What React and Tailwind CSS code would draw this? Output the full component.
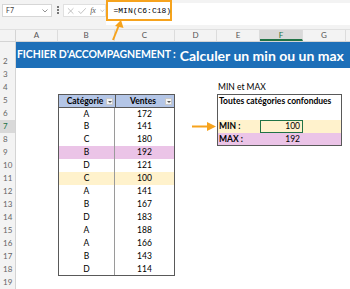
import React from 'react'

const font = { fontFamily: 'Lato, "Liberation Sans", sans-serif' }

const tableRows = [
  ['A', 172, ''],
  ['B', 141, ''],
  ['C', 180, ''],
  ['B', 192, 'bg-[#ebc4e7]'],
  ['D', 121, ''],
  ['C', 100, 'bg-[#fff2cc]'],
  ['A', 141, ''],
  ['B', 167, ''],
  ['D', 183, ''],
  ['A', 188, ''],
  ['A', 166, ''],
  ['B', 143, ''],
  ['D', 114, ''],
]

function RowHead({ n, active }) {
  return (
    <div
      className={`w-[16px] shrink-0 pl-[3px] text-[8px] leading-[13px] border-r border-[#d4d4d4] ${
        active ? 'bg-[#d9d9d9] text-[#217346]' : 'bg-[#f3f3f3] text-[#666]'
      }`}
    >
      {n}
    </div>
  )
}

function FilterBtn() {
  return (
    <span className="absolute right-[2px] top-[3px] w-[7px] h-[7px] bg-[#f4f4f4] border border-[#c8c8c8] flex items-center justify-center">
      <span className="block w-0 h-0 border-l-[2px] border-r-[2px] border-t-[2px] border-l-transparent border-r-transparent border-t-[#555]" />
    </span>
  )
}

function TableCells({ row, idx }) {
  // columns B and C for rows 5..18
  if (idx === 5) {
    return (
      <div className="flex w-[117px] h-[13px] bg-[#b4c6e7] border-l border-r border-t border-[#595959] font-bold text-[8.5px] leading-[12px] text-black">
        <div className="relative w-[57px] text-center border-r border-[#595959] pr-[4px]">
          Catégorie
          <FilterBtn />
        </div>
        <div className="relative flex-1 text-center pr-[4px]">
          Ventes
          <FilterBtn />
        </div>
      </div>
    )
  }
  const [cat, val, bg] = row
  const last = idx === 18
  return (
    <div
      className={`flex w-[117px] h-[13px] border-l border-r border-[#595959] text-[8.5px] leading-[13px] text-black ${
        last ? 'border-b' : ''
      } ${idx === 6 ? 'border-t' : ''} ${bg}`}
    >
      <div className="w-[56px] text-center border-r border-[#9a9a9a]">{cat}</div>
      <div className="flex-1 text-center">{val}</div>
    </div>
  )
}

function RightBox({ idx }) {
  if (idx === 4) {
    return (
      <div className="w-[129px] text-[8.5px] leading-[13px] text-black pl-[1px]">MIN et MAX</div>
    )
  }
  if (idx < 5 || idx > 8) return <div className="w-[129px]" />
  const base = 'w-[125px] h-[13px] border-l border-r border-[#595959] text-[8.5px] leading-[12px] text-black'
  if (idx === 5)
    return (
      <div className="w-[129px]">
        <div className={`${base} border-t font-bold pl-[1px]`}>Toutes catégories confondues</div>
      </div>
    )
  if (idx === 6)
    return (
      <div className="w-[129px]">
        <div className={base} />
      </div>
    )
  if (idx === 7)
    return (
      <div className="w-[129px]">
        <div className={`${base} flex bg-[#fff2cc]`}>
          <div className="w-[42px] font-bold pl-[1px] leading-[13px]">MIN :</div>
          <div className="w-[43px] h-[13px] border-[1.5px] border-[#217346] text-right pr-[2px] leading-[10px]">100</div>
        </div>
      </div>
    )
  return (
    <div className="w-[129px]">
      <div className={`${base} flex border-b bg-[#ebc4e7]`}>
        <div className="w-[42px] font-bold pl-[1px]">MAX :</div>
        <div className="w-[43px] text-right pr-[3px]">192</div>
      </div>
    </div>
  )
}

function ArrowRight() {
  return (
    <svg width="26" height="13" viewBox="0 0 26 13" className="absolute left-[-26px] top-0">
      <line x1="1" y1="6.5" x2="18" y2="6.5" stroke="#f6a31d" strokeWidth="2" />
      <polygon points="16,2 25,6.5 16,11" fill="#f6a31d" />
    </svg>
  )
}

function SheetRow({ idx }) {
  const inTable = idx >= 5 && idx <= 18
  return (
    <div className="flex h-[13px]">
      <RowHead n={idx} active={idx === 7} />
      <div className="w-[42px]" />
      {inTable ? <TableCells row={tableRows[idx - 6]} idx={idx} /> : <div className="w-[117px]" />}
      <div className="relative w-[42px]">{idx === 7 && <div className="absolute right-0 top-0 w-0"><ArrowRight /></div>}</div>
      <RightBox idx={idx} />
    </div>
  )
}

export default function App() {
  const colHeads = [
    ['A', 'w-[42px]'],
    ['B', 'w-[57px]'],
    ['C', 'w-[60px]'],
    ['D', 'w-[42px]'],
    ['E', 'w-[43px]'],
    ['F', 'w-[43px]'],
    ['G', 'w-[43px]'],
  ]
  const rows = []
  for (let i = 3; i <= 19; i++) rows.push(i)

  return (
    <div className="relative w-[350px] h-[289px] overflow-hidden bg-white" style={font}>
      {/* formula bar */}
      <div className="flex items-start h-[30px] bg-[#f3f3f3] border-b border-[#e0e0e0]">
        <div className="mt-[4px] ml-[2px] w-[50px] h-[13px] bg-white border border-[#d6d6d6] flex items-center justify-between px-[3px] text-[7px] text-[#444]">
          <span>F7</span>
          <svg width="6" height="4" viewBox="0 0 6 4">
            <path d="M0.5 0.5 L3 3 L5.5 0.5" fill="none" stroke="#777" strokeWidth="0.8" />
          </svg>
        </div>
        <div className="mt-[6px] ml-[5px] flex flex-col gap-[1.5px]">
          <span className="w-[1.5px] h-[1.5px] bg-[#777]" />
          <span className="w-[1.5px] h-[1.5px] bg-[#777]" />
          <span className="w-[1.5px] h-[1.5px] bg-[#777]" />
        </div>
        <div className="mt-[4px] ml-[4px] w-[43px] h-[13px] bg-white border border-[#e0e0e0] flex items-center gap-[4px] pl-[3px] text-[#b5b5b5]">
          <svg width="8" height="8" viewBox="0 0 8 8">
            <path d="M1 1 L7 7 M7 1 L1 7" stroke="#b5b5b5" strokeWidth="0.9" />
          </svg>
          <svg width="9" height="8" viewBox="0 0 9 8">
            <path d="M0.5 4 L3 6.8 L8.5 1" fill="none" stroke="#b5b5b5" strokeWidth="0.9" />
          </svg>
          <span className="italic text-[8px] text-[#555]" style={{ fontFamily: '"Liberation Serif", serif' }}>
            fx
          </span>
          <svg width="5" height="4" viewBox="0 0 5 4">
            <path d="M0.5 0.5 L2.5 2.8 L4.5 0.5" fill="none" stroke="#aaa" strokeWidth="0.7" />
          </svg>
        </div>
        <div className="relative mt-[3px] flex-1 h-[22px] bg-white">
          <div className="absolute left-0 top-[-3px] w-[66px] h-[21px] border-2 border-[#f6a31d] bg-white pl-[6px] pt-[3px] text-[8px] text-black" style={{ fontFamily: '"Liberation Mono", monospace' }}>
            =MIN(C6:C18)
          </div>
        </div>
      </div>

      {/* column headers */}
      <div className="flex h-[12px] bg-[#f3f3f3] border-b border-[#d4d4d4]">
        <div className="w-[16px] border-r border-[#d4d4d4]" />
        {colHeads.map(([c, w]) => (
          <div
            key={c}
            className={`${w} text-center text-[8px] leading-[11px] border-r border-[#dcdcdc] ${
              c === 'F' ? 'bg-[#d9d9d9] text-[#217346] border-b-2 border-b-[#217346]' : 'text-[#555]'
            }`}
          >
            {c}
          </div>
        ))}
      </div>

      {/* banner row 2 */}
      <div className="flex h-[26px]">
        <div className="w-[16px] pl-[3px] text-[8px] text-[#666] bg-[#f3f3f3] border-r border-[#d4d4d4] flex items-end pb-[1px]">2</div>
        <div className="flex-1 bg-[#1d6fb8] text-white font-bold flex items-center whitespace-nowrap pl-[1px]">
          <span className="text-[10.5px] tracking-[-0.1px]">FICHIER D'ACCOMPAGNEMENT :</span>
          <span className="text-[14px] ml-[4px]">Calculer un min ou un max</span>
        </div>
      </div>

      {rows.map((i) => (
        <SheetRow key={i} idx={i} />
      ))}

      {/* annotation arrow to formula */}
      <svg width="20" height="24" viewBox="0 0 20 24" className="absolute left-[106px] top-[18px]">
        <line x1="7" y1="22" x2="13" y2="7" stroke="#f6a31d" strokeWidth="2" />
        <polygon points="15,2 17.5,10 9,8" fill="#f6a31d" />
      </svg>
    </div>
  )
}
